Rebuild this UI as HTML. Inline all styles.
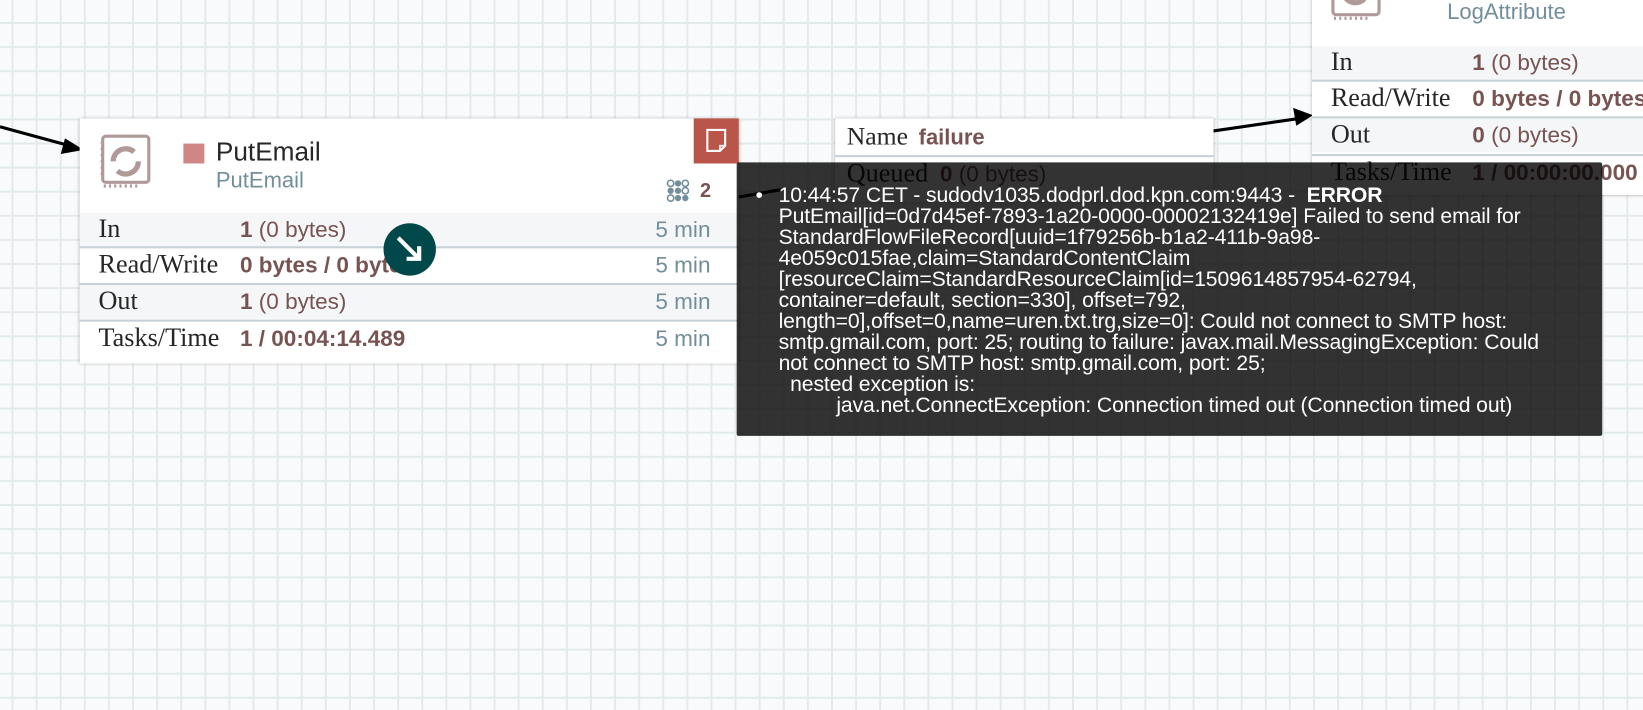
<!DOCTYPE html>
<html><head><meta charset="utf-8"><style>
*{margin:0;padding:0;box-sizing:border-box}
body{width:1643px;height:710px;overflow:hidden;position:relative;background:#f9fafb;font-family:"Liberation Sans",sans-serif}
#c{position:absolute;left:0;top:0;width:1568px;height:678px;transform:scale(1.0479);transform-origin:0 0;background-color:#f9fafb;
background-image:linear-gradient(to right,#e3eaea 2px,transparent 2px),linear-gradient(to bottom,#e3eaea 2px,transparent 2px);
background-size:23px 23px;background-position:11px 21px}
.box{position:absolute;background:#fff;box-shadow:0 0 3px rgba(0,0,0,.35)}
.row{position:absolute;left:0;right:0;height:34px;border-top:2px solid #c7d2d7;font-size:21.5px;line-height:32px}
.g{background:#f4f6f7}
.lbl{position:absolute;left:18px;font-family:"Liberation Serif",serif;color:#262626;font-size:25px}
.val{position:absolute;color:#775351}
.val b{font-weight:bold}
.tm{position:absolute;right:27px;color:#728e9b}
.tip{position:absolute;left:703px;top:155px;width:826px;height:261px;background:rgba(0,0,0,.8);color:#fff;font-size:20.2px;line-height:20px;padding:22px 0 0 40px;white-space:nowrap;letter-spacing:-.1px;border-radius:2px}
</style></head><body><div id="c">
<svg width="1568" height="678" style="position:absolute;left:0;top:0">
<line x1="0" y1="121" x2="70" y2="140" stroke="#000" stroke-width="3"/>
<polygon points="80,143 62,132 58,147" fill="#000"/>
<line x1="1158" y1="125" x2="1240" y2="113" stroke="#000" stroke-width="3"/>
<polygon points="1253,110 1234,103 1237,120" fill="#000"/>
</svg>
<div class="box" style="left:76px;top:113px;width:629px;height:234px">
 <svg style="position:absolute;left:18px;top:15px" width="52" height="52" viewBox="0 0 52 52">
  <rect x="4" y="2" width="44" height="44" rx="3" fill="none" stroke="#b09a99" stroke-width="3"/>
  <path d="M6 48v3M11 48v3M16 48v3M21 48v3M26 48v3M31 48v3M36 48v3M2 8h3M2 14h3M2 20h3M2 26h3M2 32h3M2 38h3" stroke="#b09a99" stroke-width="2"/>
  <path d="M14 26a12 12 0 0 1 20-9" fill="none" stroke="#b09a99" stroke-width="5"/>
  <path d="M38 26a12 12 0 0 1-20 9" fill="none" stroke="#b09a99" stroke-width="5"/>
 </svg>
 <div style="position:absolute;left:99px;top:24px;width:20px;height:19px;background:#d18686"></div>
 <div style="position:absolute;left:130px;top:18px;font-size:25px;color:#262626">PutEmail</div>
 <div style="position:absolute;left:130px;top:48px;font-size:21px;color:#728e9b">PutEmail</div>
 <div style="position:absolute;left:586px;top:0;width:43px;height:43px;background:#ba554a">
  <svg width="43" height="43"><path d="M13 11h17v15l-5 5H13z" fill="none" stroke="#fff" stroke-width="2"/><path d="M25 31v-5h5" fill="none" stroke="#fff" stroke-width="1.5"/></svg>
 </div>
 <svg style="position:absolute;left:560px;top:58px" width="24" height="24"><g fill="#728e9b"><circle cx="4" cy="4" r="3" fill="none" stroke="#728e9b" stroke-width="1.5"/><circle cx="11" cy="4" r="3"/><circle cx="18" cy="4" r="3" fill="none" stroke="#728e9b" stroke-width="1.5"/><circle cx="4" cy="11" r="3"/><circle cx="11" cy="11" r="3"/><circle cx="18" cy="11" r="3" fill="none" stroke="#728e9b" stroke-width="1.5"/><circle cx="4" cy="18" r="3" fill="none" stroke="#728e9b" stroke-width="1.5"/><circle cx="11" cy="18" r="3"/><circle cx="18" cy="18" r="3"/></g></svg>
 <div style="position:absolute;left:592px;top:59px;font-size:19px;font-weight:bold;color:#775351">2</div>
 <div class="row g" style="top:90px;border-top:none"><span class="lbl">In</span><span class="val" style="left:153px"><b>1</b> (0 bytes)</span><span class="tm">5 min</span></div>
 <div class="row" style="top:122px"><span class="lbl">Read/Write</span><span class="val" style="left:153px"><b>0 bytes / 0 bytes</b></span><span class="tm">5 min</span></div>
 <div class="row g" style="top:157px"><span class="lbl">Out</span><span class="val" style="left:153px"><b>1</b> (0 bytes)</span><span class="tm">5 min</span></div>
 <div class="row" style="top:192px"><span class="lbl">Tasks/Time</span><span class="val" style="left:153px"><b>1 / 00:04:14.489</b></span><span class="tm">5 min</span></div>
</div>
<svg style="position:absolute;left:365px;top:212px" width="52" height="52"><circle cx="26" cy="26" r="25" fill="#004849"/><path d="M15 15L35 35M35 23v12H23" fill="none" stroke="#fff" stroke-width="4"/></svg>
<div class="box" style="left:797px;top:113px;width:361px;height:80px">
 <div style="position:absolute;left:11px;top:4px;font-family:'Liberation Serif',serif;font-size:24.5px;color:#262626">Name <b style="font-family:'Liberation Sans',sans-serif;font-size:21px;color:#775351;margin-left:4px">failure</b></div>
 <div class="row" style="top:35px;border-top:2px solid #c7d2d7"><span class="lbl" style="left:11px">Queued</span><span class="val" style="left:100px"><b>0</b> (0 bytes)</span></div>
</div>
<div class="box" style="left:1252px;top:-20px;width:400px;height:206px">
 <svg style="position:absolute;left:16px;top:0px" width="52" height="40" viewBox="0 0 52 40"><rect x="4" y="-10" width="44" height="44" rx="3" fill="none" stroke="#b09a99" stroke-width="3"/><path d="M14 14a12 12 0 0 0 20 5" fill="none" stroke="#b09a99" stroke-width="5"/><path d="M6 36v3M11 36v3M16 36v3M21 36v3M26 36v3M31 36v3M36 36v3" stroke="#b09a99" stroke-width="2"/></svg>
 <div style="position:absolute;left:129px;top:20px;font-size:21px;color:#728e9b">LogAttribute</div>
 <div class="row g" style="top:64px;border-top:none"><span class="lbl">In</span><span class="val" style="left:153px"><b>1</b> (0 bytes)</span></div>
 <div class="row" style="top:96px"><span class="lbl">Read/Write</span><span class="val" style="left:153px"><b>0 bytes / 0 bytes</b></span></div>
 <div class="row g" style="top:131px"><span class="lbl">Out</span><span class="val" style="left:153px"><b>0</b> (0 bytes)</span></div>
 <div class="row" style="top:167px"><span class="lbl">Tasks/Time</span><span class="val" style="left:153px"><b>1 / 00:00:00.000</b></span></div>
</div>
<svg style="position:absolute;left:700px;top:175px" width="50" height="20"><line x1="5" y1="13" x2="45" y2="6" stroke="#000" stroke-width="3"/></svg>
<div class="tip"><span style="position:absolute;left:18px;top:22px">•</span>10:44:57 CET - sudodv1035.dodprl.dod.kpn.com:9443 - &nbsp;<b>ERROR</b><br>PutEmail[id=0d7d45ef-7893-1a20-0000-00002132419e] Failed to send email for<br>StandardFlowFileRecord[uuid=1f79256b-b1a2-411b-9a98-<br>4e059c015fae,claim=StandardContentClaim<br>[resourceClaim=StandardResourceClaim[id=1509614857954-62794,<br>container=default, section=330], offset=792,<br>length=0],offset=0,name=uren.txt.trg,size=0]: Could not connect to SMTP host:<br>smtp.gmail.com, port: 25; routing to failure: javax.mail.MessagingException: Could<br>not connect to SMTP host: smtp.gmail.com, port: 25;<br>&nbsp;&nbsp;nested exception is:<br>&nbsp;&nbsp;&nbsp;&nbsp;&nbsp;&nbsp;&nbsp;&nbsp;&nbsp;&nbsp;java.net.ConnectException: Connection timed out (Connection timed out)</div>
</div></body></html>
